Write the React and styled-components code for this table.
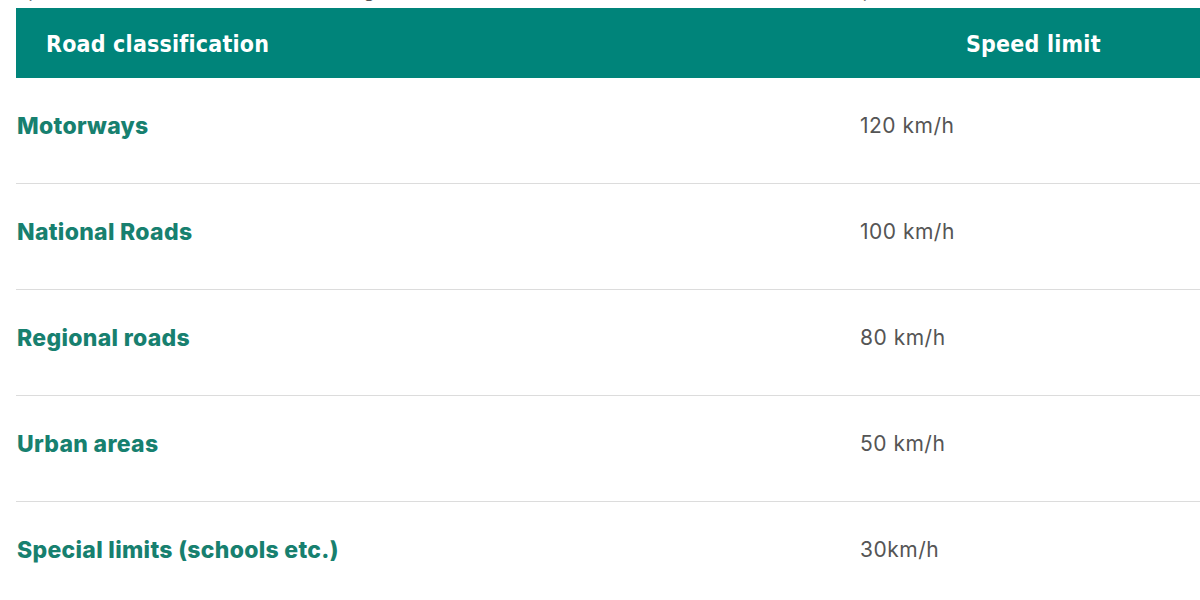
import React from 'react';
import styled, { createGlobalStyle } from 'styled-components';

const rows = [
  { name: 'Motorways', limit: '120 km/h' },
  { name: 'National Roads', limit: '100 km/h' },
  { name: 'Regional roads', limit: '80 km/h' },
  { name: 'Urban areas', limit: '50 km/h' },
  { name: 'Special limits (schools etc.)', limit: '30km/h' },
];

const App = () => {
  return (
    <Page>
      <GlobalStyle />
      <Intro>
        Speed limits in Ireland are set according to the road classification and are shown in kilometres per hour (km/h).
      </Intro>
      <Table>
        <HeadRow>
          <HeadCell>Road classification</HeadCell>
          <HeadCell $right>Speed limit</HeadCell>
        </HeadRow>
        {rows.map(item => (
          <Row key={item.name}>
            <NameCell>{item.name}</NameCell>
            <LimitCell>{item.limit}</LimitCell>
          </Row>
        ))}
      </Table>
    </Page>
  );
};

export default App;

const GlobalStyle = createGlobalStyle`
  body {
    margin: 0;
    background: #ffffff;
    overflow: hidden;
  }
`;

const Page = styled.div`
  padding: 0 0 0 16px;
  width: 1200px;
  height: 600px;
  overflow: hidden;
  box-sizing: border-box;
`;

const Intro = styled.p`
  margin: -22px 0 0 0;
  height: 30px;
  font-family: Inter, "Liberation Sans", sans-serif;
  font-size: 19px;
  line-height: 26px;
  color: #555555;
  white-space: nowrap;
`;

const Table = styled.div`
  width: 1220px;
`;

const HeadRow = styled.div`
  display: grid;
  grid-template-columns: 844px 1fr;
  align-items: center;
  height: 70px;
  padding-top: 2px;
  box-sizing: border-box;
  background: #00847a;
`;

const HeadCell = styled.div`
  padding-left: ${p => (p.$right ? '106px' : '30px')};
  font-family: "DejaVu Sans Condensed", "DejaVu Sans", sans-serif;
  font-stretch: condensed;
  font-weight: 700;
  font-size: 23px;
  color: #ffffff;
  letter-spacing: 0.2px;
`;

const Row = styled.div`
  display: grid;
  grid-template-columns: 844px 1fr;
  align-items: center;
  height: 106px;
  border-bottom: 1px solid #dcdcdc;
  padding-bottom: 10px;
  box-sizing: border-box;
`;

const NameCell = styled.div`
  padding-left: 1px;
  font-family: Inter, "Liberation Sans", sans-serif;
  font-weight: 800;
  font-size: 23px;
  letter-spacing: 0.3px;
  color: #17806f;
`;

const LimitCell = styled.div`
  font-family: Inter, "Liberation Sans", sans-serif;
  font-weight: 400;
  font-size: 21px;
  letter-spacing: 0.5px;
  color: #555555;
`;
